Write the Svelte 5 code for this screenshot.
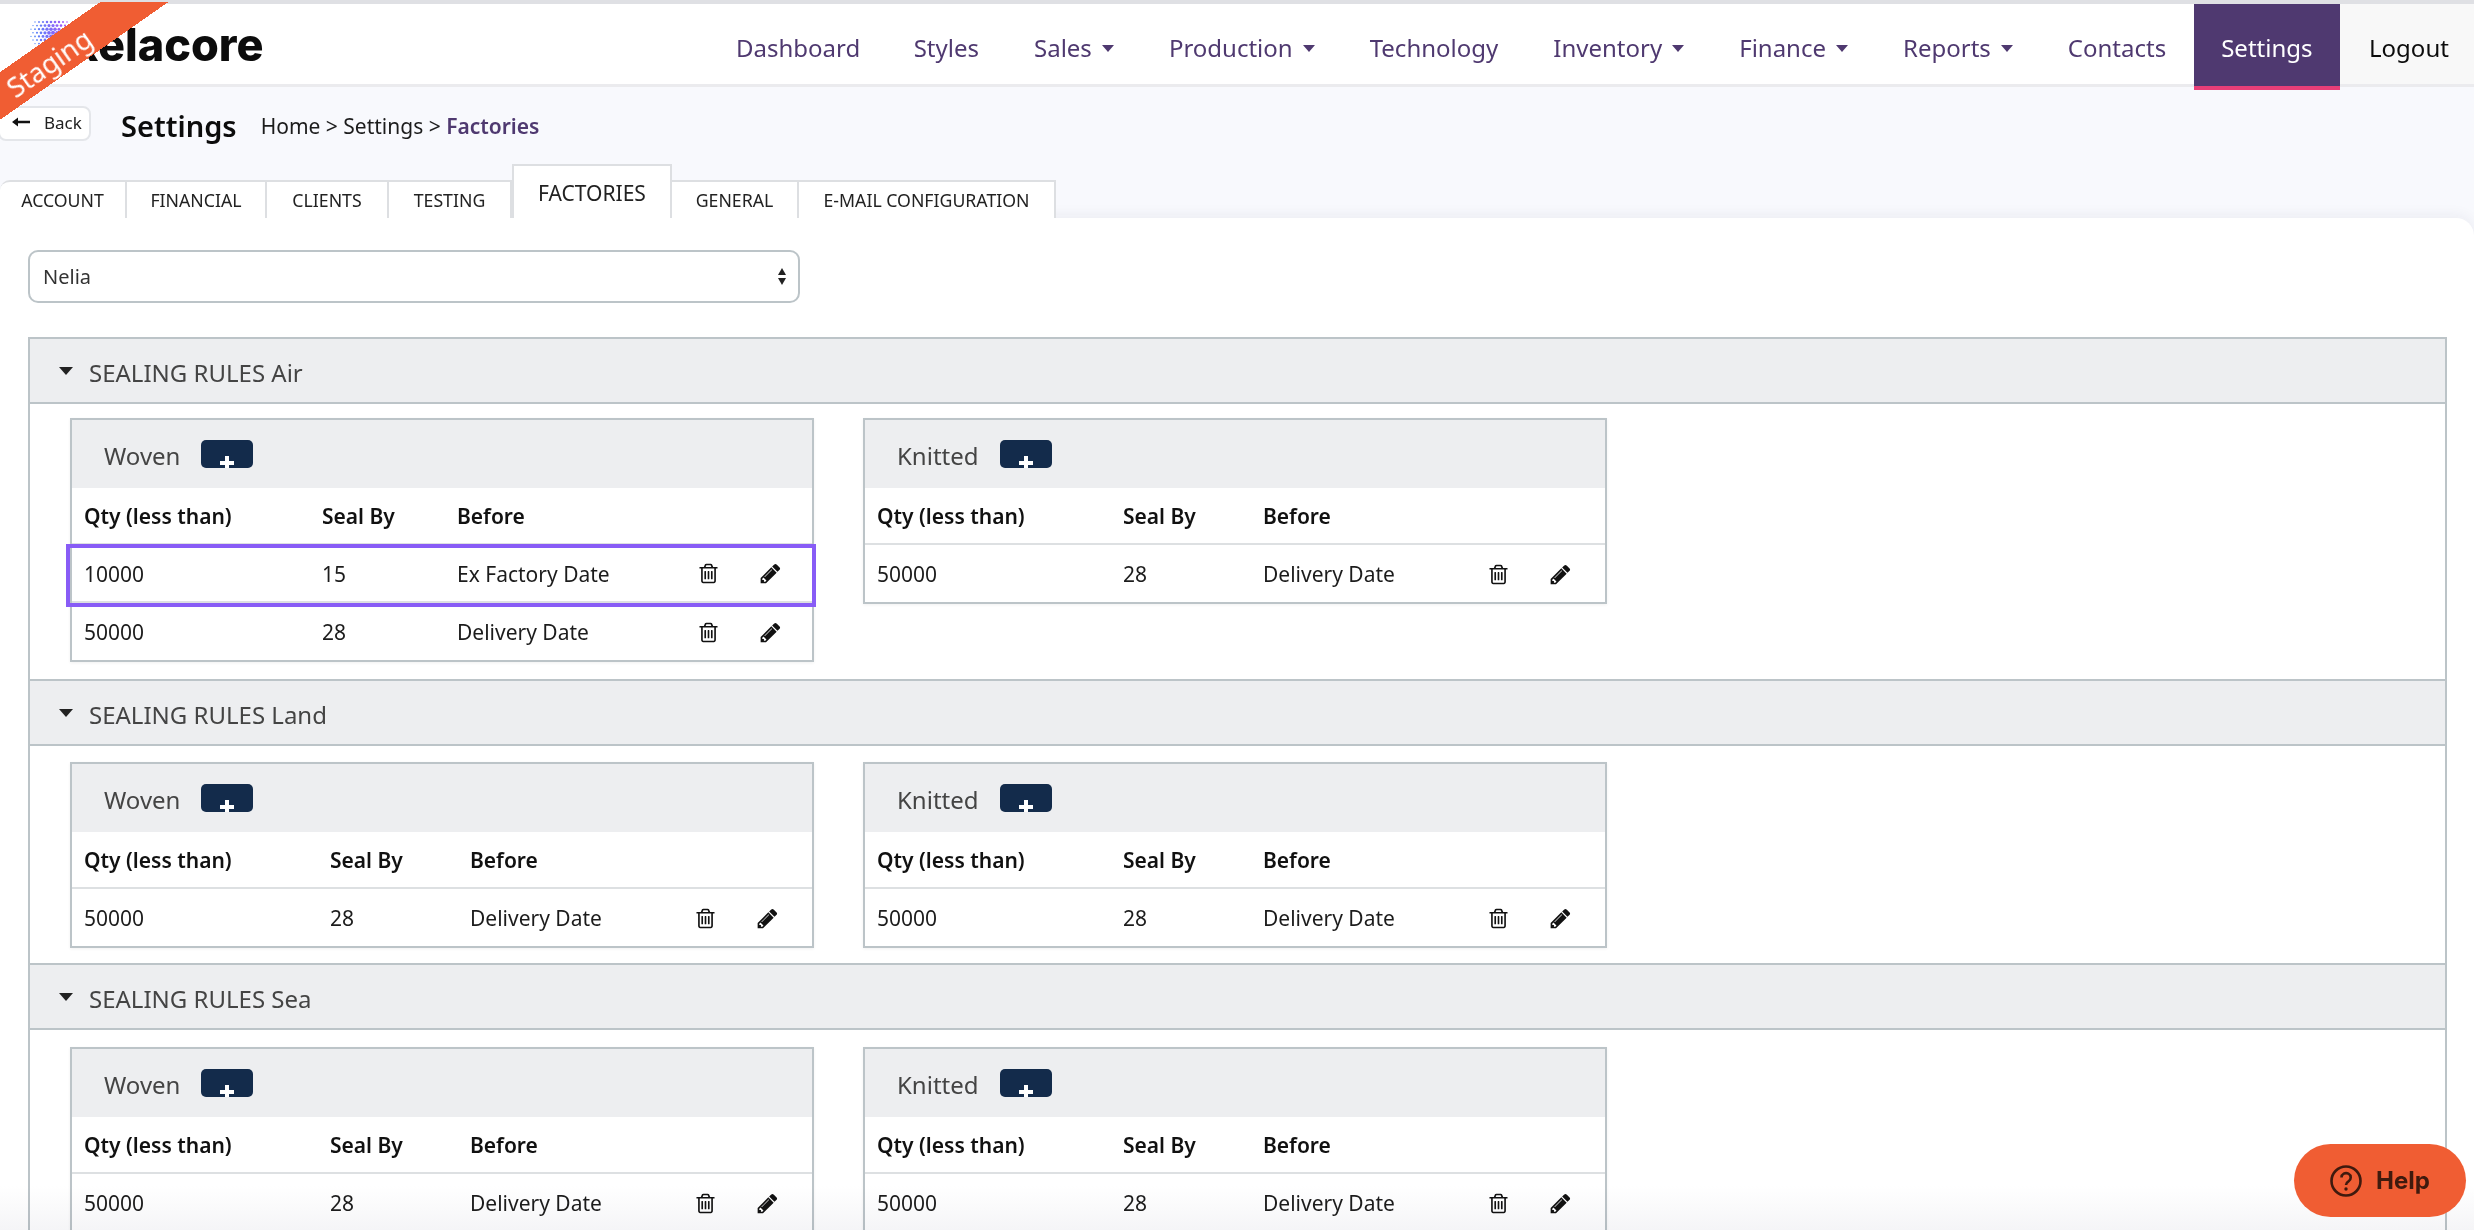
<script>
  const navItems = [
    { label: 'Dashboard' },
    { label: 'Styles' },
    { label: 'Sales', caret: true },
    { label: 'Production', caret: true },
    { label: 'Technology' },
    { label: 'Inventory', caret: true },
    { label: 'Finance', caret: true },
    { label: 'Reports', caret: true },
    { label: 'Contacts' }
  ];

  const tabs = [
    { label: 'ACCOUNT', width: 127 },
    { label: 'FINANCIAL', width: 140 },
    { label: 'CLIENTS', width: 122 },
    { label: 'TESTING', width: 123 },
    { label: 'FACTORIES', width: 160, active: true },
    { label: 'GENERAL', width: 127 },
    { label: 'E-MAIL CONFIGURATION', width: 257 }
  ];

  const delivery = { qty: 50000, seal: 28, before: 'Delivery Date' };

  const sections = [
    {
      name: 'Air',
      cards: [
        { name: 'Woven', cols: 'wide', rows: [{ qty: 10000, seal: 15, before: 'Ex Factory Date', marked: true }, delivery] },
        { name: 'Knitted', cols: 'std', rows: [delivery] }
      ]
    },
    {
      name: 'Land',
      cards: [
        { name: 'Woven', cols: 'std', rows: [delivery] },
        { name: 'Knitted', cols: 'std', rows: [delivery] }
      ]
    },
    {
      name: 'Sea',
      cards: [
        { name: 'Woven', cols: 'std', rows: [delivery] },
        { name: 'Knitted', cols: 'std', rows: [delivery] }
      ]
    }
  ];

  // halftone dots of the logo mark
  const dots = [];
  for (let r = 0; r < 9; r++) {
    for (let c = 0; c < 11; c++) {
      const x = 3 + c * 4 + (r % 2) * 2;
      const y = 3 + r * 3.6;
      const d = Math.hypot(x - 28, y - 14);
      if (d > 22) continue;
      const t = x / 44;
      const colour = `rgb(${Math.round(60 + t * 110)}, ${Math.round(150 - t * 70)}, 248)`;
      dots.push({ x, y, r: Math.max(0.6, 2.1 - d * 0.07), colour });
    }
  }
</script>

<div class="page">
  <header class="topbar">
    <div class="logo">
      <svg class="logo-mark" width="48" height="38" viewBox="0 0 48 38" aria-hidden="true">
        {#each dots as dot}
          <circle cx={dot.x} cy={dot.y} r={dot.r} fill={dot.colour} />
        {/each}
      </svg>
      <span class="logo-text">xelacore</span>
    </div>
    <nav class="nav">
      {#each navItems as item}
        <a class="nav-item" href="#top">
          {item.label}
          {#if item.caret}<span class="nav-caret"></span>{/if}
        </a>
      {/each}
      <a class="nav-item nav-active" href="#top">Settings</a>
      <a class="nav-item nav-logout" href="#top">Logout</a>
    </nav>
  </header>

  <div class="ribbon-clip">
    <div class="ribbon"><span>Staging</span></div>
  </div>

  <div class="subhead">
    <button class="back">
      <svg width="18" height="10" viewBox="0 0 18 10" aria-hidden="true">
        <path d="M0 5 L6 0.500 V3.700 H18 V6.300 H6 V9.500 Z" fill="#111" />
      </svg>
      Back
    </button>
    <h1 class="title">Settings</h1>
    <div class="crumbs">Home &gt; Settings &gt; <b>Factories</b></div>
  </div>

  <div class="tabs">
    {#each tabs as tab, i}
      <div class="tab" class:tab-active={tab.active} class:tab-first={i === 0} style="width: {tab.width}px">
        {tab.label}
      </div>
    {/each}
  </div>

  <main class="panel">
    <div class="select">
      <span>Nelia</span>
      <span class="select-arrows"><i class="up"></i><i class="down"></i></span>
    </div>

    <div class="sections">
      {#each sections as section}
        <section class="section">
          <div class="section-head">
            <span class="section-caret"></span>
            SEALING RULES {section.name}
          </div>
          <div class="section-body">
            {#each section.cards as card}
              <div class="card">
                <div class="card-head">
                  <span class="card-name">{card.name}</span>
                  <button class="add" aria-label="Add">
                    <svg width="16" height="16" viewBox="0 0 16 16" aria-hidden="true">
                      <path d="M6 1 H10 V6 H15 V10 H10 V15 H6 V10 H1 V6 H6 Z" fill="#fff" />
                    </svg>
                  </button>
                </div>
                <div class="row row-head {card.cols}">
                  <span>Qty (less than)</span>
                  <span>Seal By</span>
                  <span>Before</span>
                </div>
                {#each card.rows as row}
                  <div class="row {card.cols}" class:marked={row.marked}>
                    <span>{row.qty}</span>
                    <span>{row.seal}</span>
                    <span>{row.before}</span>
                    <span class="icon">
                      <svg width="23" height="23" viewBox="0 0 1792 1792" aria-hidden="true">
                        <path d="M704 736v576q0 14-9 23t-23 9h-64q-14 0-23-9t-9-23V736q0-14 9-23t23-9h64q14 0 23 9t9 23zm256 0v576q0 14-9 23t-23 9h-64q-14 0-23-9t-9-23V736q0-14 9-23t23-9h64q14 0 23 9t9 23zm256 0v576q0 14-9 23t-23 9h-64q-14 0-23-9t-9-23V736q0-14 9-23t23-9h64q14 0 23 9t9 23zm128 724V512H448v948q0 22 7 40.500t14.500 27 10.500 8.500h832q3 0 10.500-8.500t14.500-27 7-40.500zM672 384h448l-48-117q-7-9-17-11H738q-10 2-17 11zm928 32v64q0 14-9 23t-23 9h-96v948q0 83-47 143.500t-113 60.500H480q-66 0-113-58.500T320 1464V512h-96q-14 0-23-9t-9-23v-64q0-14 9-23t23-9h309l70-167q15-37 54-63t79-26h320q40 0 79 26t54 63l70 167h309q14 0 23 9t9 23z" fill="#111" />
                      </svg>
                    </span>
                    <span class="icon">
                      <svg width="23" height="23" viewBox="0 0 1792 1792" aria-hidden="true">
                        <path d="M491 1536l91-91-235-235-91 91v107h128v128h107zm523-928q0-22-22-22-10 0-17 7l-542 542q-7 7-7 17 0 22 22 22 10 0 17-7l542-542q7-7 7-17zm-54-192l416 416-832 832H128v-416zm683 96q0 53-37 90l-166 166-416-416 166-165q36-38 90-38 53 0 91 38l235 234q37 39 37 91z" fill="#111" />
                      </svg>
                    </span>
                  </div>
                {/each}
              </div>
            {/each}
          </div>
        </section>
      {/each}
    </div>
  </main>

  <div class="fade"></div>

  <button class="help">
    <svg width="32" height="32" viewBox="0 0 32 32" aria-hidden="true">
      <circle cx="16" cy="16" r="14.500" fill="none" stroke="#3f1a0e" stroke-width="2.600" />
      <path d="M11.500 12.500 a4.600 4.400 0 1 1 7 3.800 c-1.700 1-2.500 1.800-2.500 3.600" fill="none" stroke="#3f1a0e" stroke-width="2.600" />
      <circle cx="16" cy="24" r="1.700" fill="#3f1a0e" />
    </svg>
    Help
  </button>
</div>

<style>
  :global(body) {
    margin: 0;
    background: #f8f9fd;
  }

  .page {
    position: relative;
    height: 100vh;
    overflow: hidden;
    font-family: "Noto Sans", "Open Sans", sans-serif;
    color: #1c1c1c;
    background: #f8f9fd;
  }

  .topbar {
    display: flex;
    justify-content: space-between;
    height: 80px;
    margin-top: 4px;
    background: #fff;
    border-bottom: 3px solid #ebebee;
    box-shadow: 0 -4px 0 #dfe0e4;
  }

  .logo {
    position: relative;
    display: flex;
    align-items: center;
    padding-left: 72px;
  }

  .logo-mark {
    position: absolute;
    left: 24px;
    top: 15px;
  }

  .logo-text {
    font-family: Inter, sans-serif;
    font-size: 45px;
    font-weight: 800;
    color: #0c0c0c;
  }

  .nav {
    display: flex;
    align-items: flex-start;
  }

  .nav-item {
    display: flex;
    align-items: center;
    gap: 10px;
    box-sizing: border-box;
    height: 80px;
    padding: 6px 27.500px 0;
    font-size: 24px;
    color: #4f3970;
    text-decoration: none;
  }

  .nav-item:first-child {
    padding-right: 26px;
  }

  .nav-caret {
    width: 0;
    height: 0;
    border-left: 6.500px solid transparent;
    border-right: 6.500px solid transparent;
    border-top: 7px solid #4f3970;
    margin-top: 3px;
  }

  .nav-active {
    position: relative;
    height: 86px;
    padding-top: 4px;
    background: #4f3970;
    color: #fff;
    border-bottom: 4px solid #e83e78;
  }

  .nav-logout {
    width: 134px;
    padding: 6px 0 0 29px;
    background: #f8f8f8;
    color: #0c0c0c;
  }

  .ribbon-clip {
    position: absolute;
    left: 0;
    top: 2px;
    width: 200px;
    height: 130px;
    overflow: hidden;
    z-index: 3;
  }

  .ribbon {
    position: absolute;
    left: -70px;
    top: 36px;
    width: 250px;
    height: 39px;
    display: flex;
    justify-content: center;
    align-items: center;
    background: #f05d33;
    color: #fff;
    font-size: 27px;
    transform: rotate(-35deg);
  }

  .ribbon span {
    position: relative;
    left: -8px;
    top: 1px;
  }

  .subhead {
    display: flex;
    align-items: center;
    height: 78px;
    margin-top: -2px;
  }

  .back {
    display: flex;
    align-items: center;
    gap: 14px;
    width: 93px;
    height: 35px;
    margin: -2px 0 0 -2px;
    padding: 0 0 2px 12px;
    box-sizing: border-box;
    border: 2px solid #e4e6ea;
    border-radius: 8px;
    background: #fff;
    font: 400 17px "Noto Sans", sans-serif;
    color: #222;
  }

  .title {
    margin: 2px 0 0 30px;
    font-size: 29px;
    font-weight: 600;
    color: #0c0c0c;
  }

  .crumbs {
    margin: 4px 0 0 24px;
    font-size: 21px;
    color: #1c1c1c;
  }

  .crumbs b {
    font-weight: 600;
    color: #4f3970;
  }

  .tabs {
    display: flex;
    align-items: flex-end;
    height: 53px;
    margin-top: 2px;
    position: relative;
    z-index: 1;
  }

  .tab {
    box-sizing: border-box;
    height: 38px;
    display: flex;
    align-items: center;
    justify-content: center;
    padding-bottom: 1px;
    background: #fff;
    border: 2px solid #dddfe2;
    border-width: 2px 2px 0 0;
    font-size: 17.700px;
    color: #222;
  }

  .tab-first {
    border-top-left-radius: 10px;
  }

  .tab-active {
    height: 54px;
    border-width: 2px 2px 0 2px;
    padding: 1px 0 0;
    font-size: 21px;
  }

  .panel {
    position: relative;
    background: #fff;
    border-top-right-radius: 18px;
    padding: 32px 27px 0 28px;
    box-shadow: 0 -3px 14px rgba(40, 40, 70, 0.06);
  }

  .select {
    display: flex;
    align-items: center;
    justify-content: space-between;
    box-sizing: border-box;
    width: 772px;
    height: 53px;
    padding: 0 12px 0 13px;
    border: 2px solid #bcc4c8;
    border-radius: 10px;
    font-size: 20px;
    color: #333;
  }

  .select-arrows {
    display: flex;
    flex-direction: column;
    gap: 3px;
  }

  .select-arrows i {
    width: 0;
    height: 0;
    border-left: 4.500px solid transparent;
    border-right: 4.500px solid transparent;
  }

  .up {
    border-bottom: 7px solid #222;
  }

  .down {
    border-top: 7px solid #222;
  }

  .sections {
    margin-top: 34px;
    border: solid #bcc4c8;
    border-width: 0 2px;
  }

  .section-head {
    display: flex;
    align-items: center;
    gap: 16px;
    box-sizing: border-box;
    height: 67px;
    padding: 3px 0 0 29px;
    background: #edeef0;
    border: solid #bcc4c8;
    border-width: 2px 0;
    font-size: 24px;
    color: #444;
  }

  .section-caret {
    width: 0;
    height: 0;
    border-left: 7.500px solid transparent;
    border-right: 7.500px solid transparent;
    border-top: 8px solid #222;
    margin-top: -3px;
  }

  .section-body {
    display: flex;
    align-items: flex-start;
    gap: 49px;
    padding: 16px 40px 15px;
  }

  .section:first-child .section-body {
    padding: 14px 40px 17px;
  }

  .section:last-child .section-body {
    padding-top: 17px;
  }

  .card {
    width: 744px;
    box-sizing: border-box;
    border: 2px solid #bcc4c8;
    box-shadow: 0 1px 3px rgba(0, 0, 0, 0.06);
  }

  .card-head {
    display: flex;
    align-items: center;
    gap: 21px;
    height: 68px;
    padding-left: 32px;
    background: #edeef0;
    font-size: 24px;
    color: #444;
  }

  .card-name {
    position: relative;
    top: 1px;
  }

  .add {
    display: flex;
    justify-content: center;
    align-items: flex-start;
    width: 52px;
    height: 28px;
    padding: 15px 0 0;
    border: 0;
    border-radius: 5px;
    overflow: hidden;
    background: #132b4b;
  }

  .row {
    display: grid;
    align-items: center;
    box-sizing: border-box;
    height: 58px;
    padding-top: 1px;
    font-size: 21px;
    color: #1c1c1c;
  }

  .row:last-child {
    height: 57px;
  }

  .row > span:nth-child(-n + 3) {
    padding-left: 12px;
  }

  .row-head {
    height: 57px;
    padding-top: 0;
    border-bottom: 2px solid #dde0e2;
    font-weight: 600;
    color: #111;
  }

  .wide {
    grid-template-columns: 238px 135px 232px 62px 62px;
  }

  .std {
    grid-template-columns: 246px 140px 216px 62px 62px;
  }

  .marked {
    position: relative;
    border-bottom: 2px solid #dde0e2;
  }

  /* focus frame lying over the row */
  .marked::after {
    content: "";
    position: absolute;
    top: -1px;
    left: -6px;
    right: -4px;
    bottom: -6px;
    border: 4px solid #885cf6;
    pointer-events: none;
  }

  .icon {
    display: flex;
    justify-content: center;
  }

  .fade {
    position: absolute;
    left: 0;
    right: 0;
    bottom: 0;
    height: 44px;
    background: linear-gradient(#fff, #f5f5f7);
    mix-blend-mode: multiply;
    pointer-events: none;
  }

  .help {
    position: absolute;
    right: 8px;
    bottom: 13px;
    display: flex;
    align-items: center;
    justify-content: center;
    gap: 14px;
    width: 172px;
    height: 73px;
    border: 0;
    border-radius: 37px;
    background: #f05d33;
    font: 700 24px Inter, sans-serif;
    color: #3f1a0e;
  }
</style>
